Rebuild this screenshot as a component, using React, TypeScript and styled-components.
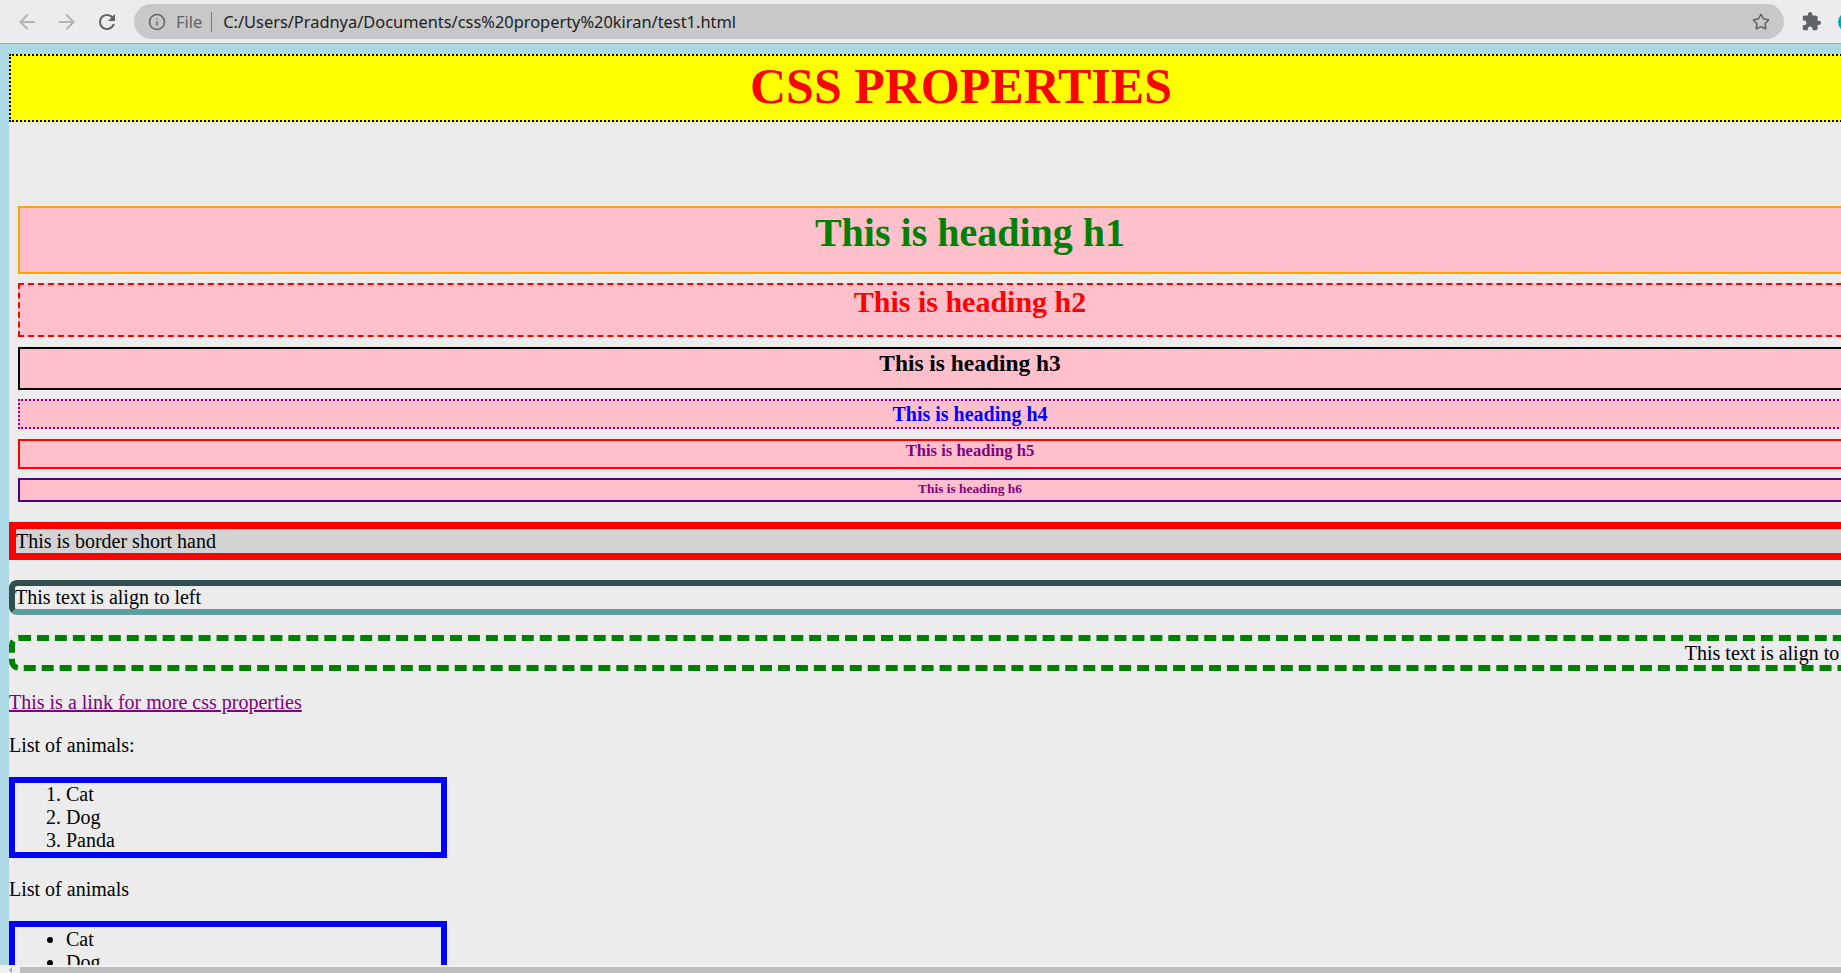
import React from "react";
import styled, { createGlobalStyle } from "styled-components";
import { Info, Star } from "lucide-react";

const GlobalStyle = createGlobalStyle`
  html, body {
    margin: 0;
    padding: 0;
    height: 100%;
    overflow: hidden;
  }
  body {
    font-family: "Liberation Serif", "Times New Roman", serif;
    font-size: 20px;
    line-height: 23px;
    color: #000;
  }
`;

const Window = styled.div`
  position: relative;
  width: 1841px;
  height: 973px;
  overflow: hidden;
  display: flex;
  flex-direction: column;
`;

const Toolbar = styled.div`
  flex: none;
  height: 43px;
  box-sizing: content-box;
  padding-left: 7px;
  display: flex;
  align-items: center;
  background: #ececec;
  border-bottom: 1px solid #a8a8a8;
`;

const NavButton = styled.span<{ $dim?: boolean }>`
  flex: none;
  width: 40px;
  display: flex;
  justify-content: center;
  color: ${(p) => (p.$dim ? "#b4b4b4" : "#5f6368")};
`;

const AddressBar = styled.div`
  flex: none;
  width: 1650px;
  height: 35px;
  margin-left: 7px;
  padding: 0 14px;
  box-sizing: border-box;
  border-radius: 18px;
  background: #c8c8c8;
  display: flex;
  align-items: center;
  font-family: "Noto Sans", "Open Sans", sans-serif;
  font-size: 16.4px;
  color: #5f6368;
`;

const Scheme = styled.span`
  margin-left: 10px;
  padding-right: 9px;
  border-right: 1px solid #7c7c7c;
  line-height: 20px;
`;

const Url = styled.span`
  margin-left: 11px;
  color: #202124;
  flex: 1;
`;

const Extension = styled.span`
  flex: none;
  margin-left: 17px;
  color: #5f6368;
  display: flex;
`;

const Avatar = styled.span`
  flex: none;
  width: 20px;
  height: 20px;
  margin-left: 16px;
  border-radius: 50%;
  background: #0aa5b5;
`;

const Page = styled.div`
  flex: 1;
  min-height: 0;
  background: lightblue;
  padding: 10px 0 0 9px;
  overflow: hidden;
`;

const Content = styled.div`
  width: 1904px;
  height: 100%;
  background: #ececec;
`;

const Banner = styled.div`
  height: 68px;
  box-sizing: border-box;
  border: 2px dotted #000;
  background: #ff0;
  color: #f00;
  font-size: 50px;
  font-weight: bold;
  line-height: 60px;
  text-align: center;
`;

const Headings = styled.div`
  width: 1904px;
  margin: 84px 0 0 9px;
  display: flex;
  flex-direction: column;
`;

const Heading = styled.div<{
  $size: number;
  $height: number;
  $gap: number;
  $lead: number;
  $color: string;
  $border: string;
}>`
  height: ${(p) => p.$height}px;
  margin-bottom: ${(p) => p.$gap}px;
  box-sizing: border-box;
  background: pink;
  border: ${(p) => p.$border};
  color: ${(p) => p.$color};
  font-size: ${(p) => p.$size}px;
  font-weight: bold;
  line-height: ${(p) => p.$lead}px;
  text-align: center;
`;

const ShortHand = styled.div`
  margin-top: 20px;
  height: 38px;
  box-sizing: border-box;
  border: 7px solid #f00;
  background: #d3d3d3;
  line-height: 24px;
`;

const AlignLeft = styled.div`
  margin-top: 20px;
  height: 35px;
  box-sizing: border-box;
  border: 6px solid;
  border-color: darkslategray darkslategray cadetblue darkslategray;
  border-radius: 8px;
  line-height: 23px;
`;

const AlignRight = styled.div`
  margin-top: 20px;
  height: 36px;
  box-sizing: border-box;
  border: 6px dashed green;
  border-radius: 10px;
  padding-right: 25px;
  line-height: 24px;
  text-align: right;
`;

const MoreLink = styled.a`
  display: block;
  width: fit-content;
  margin-top: 20px;
  color: purple;
  text-decoration: underline;
`;

const Caption = styled.p`
  margin: 20px 0;
`;

const BoxedList = styled.ol<{ $bullets?: boolean }>`
  width: 438px;
  margin: 0;
  padding: ${(p) => (p.$bullets ? "1px" : "0")} 0 0 51px;
  box-sizing: border-box;
  border: 6px solid blue;
  list-style: ${(p) => (p.$bullets ? "disc" : "decimal")};
`;

const ScrollBar = styled.div`
  position: absolute;
  left: 0;
  right: 0;
  bottom: 0;
  height: 8px;
  padding-left: 20px;
  background: #f1f1f1;

  &::before {
    content: "";
    position: absolute;
    left: 9px;
    bottom: 0;
    border-style: solid;
    border-width: 3px 3px 3px 0;
    border-color: transparent #a3a3a3 transparent transparent;
  }
`;

const Thumb = styled.div`
  height: 6px;
  margin-top: 2px;
  background: #bdbdbd;
`;

const Glyph: React.FC<{ d: string; size?: number }> = ({ d, size = 24 }) => (
  <svg width={size} height={size} viewBox="0 0 24 24" fill="currentColor">
    <path d={d} />
  </svg>
);

const backPath = "M20 11H7.83l5.59-5.59L12 4l-8 8 8 8 1.41-1.41L7.83 13H20v-2z";
const forwardPath = "M4 11h12.17l-5.59-5.59L12 4l8 8-8 8-1.41-1.41L16.17 13H4v-2z";
const reloadPath =
  "M17.65 6.35C16.2 4.9 14.21 4 12 4c-4.42 0-7.99 3.58-7.99 8s3.57 8 7.99 8c3.73 0 6.84-2.55 7.73-6h-2.08c-.82 2.33-3.04 4-5.65 4-3.31 0-6-2.69-6-6s2.69-6 6-6c1.66 0 3.14.69 4.22 1.78L13 11h7V4l-2.35 2.35z";
const extensionPath =
  "M20.5 11H19V7c0-1.1-.9-2-2-2h-4V3.5C13 2.12 11.88 1 10.5 1S8 2.12 8 3.5V5H4c-1.1 0-1.99.9-1.99 2v3.8H3.5c1.49 0 2.7 1.21 2.7 2.7s-1.21 2.7-2.7 2.7H2V20c0 1.1.9 2 2 2h3.8v-1.5c0-1.49 1.21-2.7 2.7-2.7 1.49 0 2.7 1.21 2.7 2.7V22H17c1.1 0 2-.9 2-2v-4h1.5c1.38 0 2.5-1.12 2.5-2.5S21.88 11 20.5 11z";

const headings = [
  { text: "This is heading h1", size: 40, height: 68, gap: 9, lead: 50, color: "green", border: "2px solid orange" },
  { text: "This is heading h2", size: 30, height: 54, gap: 10, lead: 33, color: "red", border: "2px dashed red" },
  { text: "This is heading h3", size: 23.4, height: 43, gap: 9, lead: 29, color: "black", border: "2px solid black" },
  { text: "This is heading h4", size: 20, height: 30, gap: 10, lead: 27, color: "blue", border: "2px dotted darkmagenta" },
  { text: "This is heading h5", size: 16.6, height: 30, gap: 9, lead: 19, color: "purple", border: "2px solid red" },
  { text: "This is heading h6", size: 13.4, height: 24, gap: 0, lead: 18, color: "purple", border: "2px solid indigo" },
];

const animals = ["Cat", "Dog", "Panda"];

const App: React.FC = () => {
  return (
    <>
      <GlobalStyle />
      <Window>
        <Toolbar>
          <NavButton $dim>
            <Glyph d={backPath} />
          </NavButton>
          <NavButton $dim>
            <Glyph d={forwardPath} />
          </NavButton>
          <NavButton>
            <Glyph d={reloadPath} />
          </NavButton>
          <AddressBar>
            <Info size={18} />
            <Scheme>File</Scheme>
            <Url>C:/Users/Pradnya/Documents/css%20property%20kiran/test1.html</Url>
            <Star size={18} />
          </AddressBar>
          <Extension>
            <Glyph d={extensionPath} size={21} />
          </Extension>
          <Avatar />
        </Toolbar>
        <Page>
          <Content>
            <Banner>CSS PROPERTIES</Banner>
            <Headings>
              {headings.map((h) => (
                <Heading
                  key={h.text}
                  $size={h.size}
                  $height={h.height}
                  $gap={h.gap}
                  $lead={h.lead}
                  $color={h.color}
                  $border={h.border}
                >
                  {h.text}
                </Heading>
              ))}
            </Headings>
            <ShortHand>This is border short hand</ShortHand>
            <AlignLeft>This text is align to left</AlignLeft>
            <AlignRight>This text is align to right</AlignRight>
            <MoreLink href="#">This is a link for more css properties</MoreLink>
            <Caption>List of animals:</Caption>
            <BoxedList>
              {animals.map((a) => (
                <li key={a}>{a}</li>
              ))}
            </BoxedList>
            <Caption>List of animals</Caption>
            <BoxedList as="ul" $bullets>
              {animals.map((a) => (
                <li key={a}>{a}</li>
              ))}
            </BoxedList>
          </Content>
        </Page>
        <ScrollBar>
          <Thumb />
        </ScrollBar>
      </Window>
    </>
  );
};

export default App;
